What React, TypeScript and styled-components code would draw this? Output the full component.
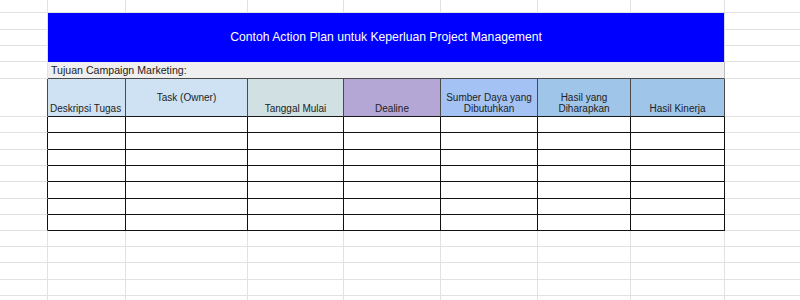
import * as React from "react";
import styled, { createGlobalStyle } from "styled-components";

const GlobalStyle = createGlobalStyle`
  html, body {
    margin: 0;
    padding: 0;
    background: #ffffff;
  }
  body {
    font-family: "Liberation Sans", Arial, sans-serif;
    overflow: hidden;
  }
`;

const COLS = [48, 78, 122, 96, 97, 97, 93, 94, 75];
const ROWS = [13, 17, 16, 16, 17, 38, 16, 17, 16, 16, 17, 16, 16, 16, 16, 17, 16, 8];

const GRID_LINE = "#e2e2e2";

const Sheet = styled.div`
  display: grid;
  grid-template-columns: ${COLS.map((c) => `${c}px`).join(" ")};
  grid-template-rows: ${ROWS.map((r) => `${r}px`).join(" ")};
  width: 800px;
  height: 300px;
  overflow: hidden;
`;

// empty spreadsheet cell with the light gridlines
const Blank = styled.div<{ $edge?: string; $last?: boolean }>`
  box-sizing: border-box;
  background: #ffffff;
  border-bottom: 1px solid ${GRID_LINE};
  border-right: ${({ $last, $edge }) =>
    $last ? "none" : `1px solid ${$edge || GRID_LINE}`};
`;

const TitleCell = styled.div`
  grid-column: span 7;
  grid-row: span 3;
  box-sizing: border-box;
  background: #0000ff;
  color: #ffffff;
  font-size: 12.2px;
  display: flex;
  align-items: center;
  justify-content: center;
  padding-bottom: 1px;
  border-right: 1px solid #d9d9d9;
`;

const NoteCell = styled.div`
  grid-column: span 7;
  box-sizing: border-box;
  background: #efefef;
  color: #222222;
  font-size: 10.6px;
  display: flex;
  align-items: flex-end;
  padding: 0 0 2px 3px;
  border-right: 1px solid #bdbdbd;
  border-bottom: 1px solid #4a4a4a;
`;

const HeadCell = styled.div<{
  $bg: string;
  $align: "left" | "center";
  $middle?: boolean;
}>`
  box-sizing: border-box;
  background: ${({ $bg }) => $bg};
  color: #222222;
  font-size: 10px;
  line-height: 11px;
  display: flex;
  flex-direction: column;
  justify-content: ${({ $middle }) => ($middle ? "center" : "flex-end")};
  align-items: ${({ $align }) => ($align === "left" ? "flex-start" : "center")};
  text-align: ${({ $align }) => $align};
  white-space: ${({ $align }) => ($align === "left" ? "nowrap" : "normal")};
  overflow: hidden;
  padding: ${({ $middle }) => ($middle ? "0 2px 1px" : "0 2px 2px")};
  border-right: 1px solid #4a4a4a;
  border-bottom: 1px solid #1a1a1a;
`;

const DataCell = styled.div`
  box-sizing: border-box;
  background: #ffffff;
  border-right: 1px solid #111111;
  border-bottom: 1px solid #111111;
`;

type Head = { label: string; bg: string; align: "left" | "center"; middle?: boolean };

const HEADS: Head[] = [
  { label: "Deskripsi Tugas", bg: "#cfe2f3", align: "left" },
  { label: "Task (Owner)", bg: "#cfe2f3", align: "center", middle: true },
  { label: "Tanggal Mulai", bg: "#d0e0e3", align: "center" },
  { label: "Dealine", bg: "#b4a7d6", align: "center" },
  { label: "Sumber Daya yang Dibutuhkan", bg: "#a4c2f4", align: "center" },
  { label: "Hasil yang Diharapkan", bg: "#9fc5e8", align: "center" },
  { label: "Hasil Kinerja", bg: "#9fc5e8", align: "center" },
];

const DATA_ROWS = 7;
const TAIL_ROWS = 5;

function BlankRow({ n }: { n: number }) {
  return (
    <>
      {COLS.map((_, i) => (
        <Blank key={`${n}-${i}`} $last={i === COLS.length - 1} />
      ))}
    </>
  );
}

export default function App() {
  return (
    <>
      <GlobalStyle />
      <Sheet>
        <BlankRow n={0} />

        {/* title band */}
        <Blank />
        <TitleCell>Contoh Action Plan untuk Keperluan Project Management</TitleCell>
        <Blank $last />
        <Blank />
        <Blank $last />
        <Blank />
        <Blank $last />

        {/* campaign row */}
        <Blank />
        <NoteCell>Tujuan Campaign Marketing:</NoteCell>
        <Blank $last />

        {/* header row */}
        <Blank $edge="#4a4a4a" />
        {HEADS.map((h) => (
          <HeadCell key={h.label} $bg={h.bg} $align={h.align} $middle={h.middle}>
            {h.label}
          </HeadCell>
        ))}
        <Blank $last />

        {/* empty table body */}
        {Array.from({ length: DATA_ROWS }).map((_, r) => (
          <React.Fragment key={`d${r}`}>
            <Blank $edge="#111111" />
            {HEADS.map((h) => (
              <DataCell key={h.label} />
            ))}
            <Blank $last />
          </React.Fragment>
        ))}

        {Array.from({ length: TAIL_ROWS }).map((_, r) => (
          <BlankRow key={`t${r}`} n={r + 1} />
        ))}
      </Sheet>
    </>
  );
}
